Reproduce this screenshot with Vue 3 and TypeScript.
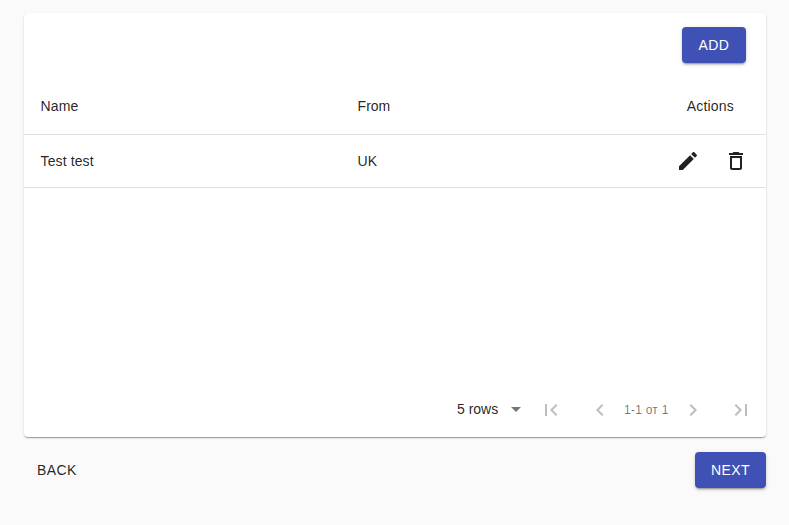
<script setup lang="ts">
const rows = [{ name: 'Test test', from: 'UK' }]
const edit = 'M3 17.25V21h3.75L17.81 9.94l-3.75-3.75L3 17.25zM20.71 7.04c.39-.39.39-1.02 0-1.41l-2.34-2.34c-.39-.39-1.02-.39-1.41 0l-1.83 1.83 3.75 3.75 1.83-1.83z'
const del = 'M6 19c0 1.1.9 2 2 2h8c1.1 0 2-.9 2-2V7H6v12zM8 9h8v10H8V9zm7.5-5l-1-1h-5l-1 1H5v2h14V4z'
</script>

<template>
  <div class="page">
    <section class="card">
      <div class="toolbar">
        <button class="btn primary">Add</button>
      </div>
      <div class="row head">
        <div class="name">Name</div>
        <div class="from">From</div>
        <div class="actions-head">Actions</div>
      </div>
      <div v-for="r in rows" :key="r.name" class="row body">
        <div class="name">{{ r.name }}</div>
        <div class="from">{{ r.from }}</div>
        <div class="actions">
          <span class="icon-btn"><svg viewBox="0 0 24 24" class="icon"><path :d="edit" /></svg></span>
          <span class="icon-btn"><svg viewBox="0 0 24 24" class="icon"><path :d="del" /></svg></span>
        </div>
      </div>
      <div class="spacer"></div>
      <div class="pager">
        <span class="rows">5 rows</span>
        <svg viewBox="0 0 24 24" class="icon caret"><path d="M7 10l5 5 5-5z" /></svg>
        <span class="nav first"><svg viewBox="0 0 24 24" class="icon"><path d="M18.41 16.59L13.82 12l4.59-4.59L17 6l-6 6 6 6zM6 6h2v12H6z" /></svg></span>
        <span class="nav prev"><svg viewBox="0 0 24 24" class="icon"><path d="M15.41 7.41L14 6l-6 6 6 6 1.41-1.41L10.83 12z" /></svg></span>
        <span class="range">1-1 от 1</span>
        <span class="nav next"><svg viewBox="0 0 24 24" class="icon"><path d="M10 6L8.59 7.41 13.17 12l-4.58 4.59L10 18l6-6z" /></svg></span>
        <span class="nav last"><svg viewBox="0 0 24 24" class="icon"><path d="M5.59 7.41L10.18 12l-4.59 4.59L7 18l6-6-6-6zM16 6h2v12h-2z" /></svg></span>
      </div>
    </section>
    <div class="footer">
      <button class="btn text">Back</button>
      <button class="btn primary next-btn">Next</button>
    </div>
  </div>
</template>

<style scoped>
.page {
  box-sizing: border-box;
  height: 525px;
  padding: 13px 23px 0 24px;
  font-family: "Liberation Sans", Arial, sans-serif;
  font-size: 14px;
  color: rgba(0, 0, 0, 0.87);
}
.card {
  height: 424px;
  background: #fff;
  border-radius: 4px;
  box-shadow: 0 2px 1px -1px rgba(0, 0, 0, 0.2), 0 1px 1px 0 rgba(0, 0, 0, 0.14), 0 1px 3px 0 rgba(0, 0, 0, 0.12);
  display: flex;
  flex-direction: column;
}
.toolbar {
  display: flex;
  justify-content: flex-end;
  padding: 14px 20px 15px 0;
}
.btn {
  font-family: inherit;
  font-size: 14px;
  letter-spacing: 0.4px;
  text-transform: uppercase;
  height: 36px;
  min-width: 64px;
  border: 0;
  border-radius: 4px;
  padding: 0 16px;
  cursor: pointer;
}
.primary {
  background: #3f51b5;
  color: #fff;
  box-shadow: 0 3px 1px -2px rgba(0, 0, 0, 0.2), 0 2px 2px 0 rgba(0, 0, 0, 0.14), 0 1px 5px 0 rgba(0, 0, 0, 0.12);
}
.text {
  background: transparent;
  color: rgba(0, 0, 0, 0.87);
  padding: 0 13px;
}
.row {
  display: flex;
  align-items: center;
  border-bottom: 1px solid #e0e0e0;
  box-sizing: border-box;
  padding-left: 16.6px;
}
.head {
  height: 57px;
}
.body {
  height: 53px;
}
.name {
  width: 317px;
  letter-spacing: 0.1px;
}
.from {
  flex: 1;
}
.actions-head {
  padding-right: 32px;
  letter-spacing: 0.2px;
}
.actions {
  display: flex;
  padding-right: 6px;
}
.icon-btn {
  width: 48px;
  height: 48px;
  display: flex;
  align-items: center;
  justify-content: center;
}
.icon {
  width: 24px;
  height: 24px;
  fill: currentColor;
  display: block;
}
.spacer {
  flex: 1;
}
.pager {
  height: 56px;
  display: flex;
  align-items: center;
  padding-left: 433px;
}
.rows {
  width: 47px;
}
.caret {
  color: rgba(0, 0, 0, 0.54);
}
.nav {
  color: rgba(0, 0, 0, 0.26);
  display: flex;
  padding-top: 1px;
}
.first {
  margin-left: 11px;
}
.prev {
  margin-left: 25px;
}
.range {
  font-size: 12px;
  letter-spacing: 0.25px;
  color: rgba(0, 0, 0, 0.54);
  margin-left: 12px;
  padding-top: 1px;
  width: 45px;
  white-space: nowrap;
}
.next {
  margin-left: 12px;
}
.last {
  margin-left: 24px;
}
.footer {
  display: flex;
  justify-content: space-between;
  margin-top: 15px;
}
</style>

<style>
html, body {
  background: #fafafa;
}
</style>
